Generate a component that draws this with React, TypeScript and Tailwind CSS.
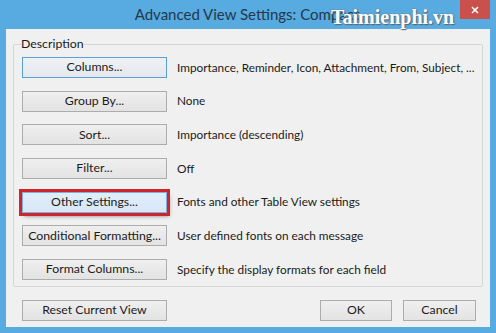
import React from "react";

const rows: { label: string; desc: string; kind?: "default" | "hot" }[] = [
  { label: "Columns...", desc: "Importance, Reminder, Icon, Attachment, From, Subject, ...", kind: "default" },
  { label: "Group By...", desc: "None" },
  { label: "Sort...", desc: "Importance (descending)" },
  { label: "Filter...", desc: "Off" },
  { label: "Other Settings...", desc: "Fonts and other Table View settings", kind: "hot" },
  { label: "Conditional Formatting...", desc: "User defined fonts on each message" },
  { label: "Format Columns...", desc: "Specify the display formats for each field" },
];

function Btn({ label, kind, className = "" }: { label: string; kind?: "default" | "hot"; className?: string }) {
  const base =
    kind === "default"
      ? "border-[#5b9fdc] bg-[linear-gradient(#eff2f5,#e4e8ec)]"
      : kind === "hot"
      ? "border-[#7ab0e4] bg-[linear-gradient(#e2eefa,#d6e7f7)] outline-[3px] outline-solid outline-[#d0242c] shadow-[2px_3px_4px_rgba(0,0,0,0.45)]"
      : "border-[#acacac] bg-[linear-gradient(#efefef,#e3e3e3)]";
  return (
    <div
      className={`h-[21px] flex items-center justify-center border text-[12.3px] text-[#1b1b1b] leading-none ${base} ${className}`}
    >
      {label}
    </div>
  );
}

export default function App() {
  return (
    <div
      className="w-[496px] h-[333px] bg-[#58abe0] flex flex-col overflow-hidden"
      style={{ fontFamily: 'Lato, "Noto Sans", sans-serif' }}
    >
      <div className="relative h-[29px] shrink-0 flex items-center justify-center">
        <span className="text-[15px] text-[#23384c] -translate-x-[1px]">
          Advanced View Settings: Compact
        </span>
        <div className="absolute right-[6px] top-0 w-[30px] h-[19px] bg-[#c9504b] flex items-center justify-center">
          <svg width="8" height="8" viewBox="0 0 8 8">
            <path d="M1 1L7 7M7 1L1 7" stroke="#fff" strokeWidth="1.6" />
          </svg>
        </div>
        <span
          className="absolute left-[331px] top-[7px] text-[20px] font-bold text-white leading-none"
          style={{
            fontFamily: '"Liberation Serif", serif',
            textShadow: "0 0 2px #6a7f90, 1px 1px 1px #4c6275",
          }}
        >
          Taimienphi.vn
        </span>
      </div>
      <div className="flex-1 mx-[6px] mb-[6px] bg-[#f0f0f0] flex flex-col px-[7px] pt-[8px]">
        <fieldset className="border border-[#d5d5d5] rounded-[2px] px-[8px] pb-[6px] pt-[6px] w-[470px]">
          <legend className="text-[12.3px] text-[#1b1b1b] px-0 -ml-[1px] leading-[14px]">Description</legend>
          <div className="flex flex-col gap-[12.7px]">
            {rows.map((r) => (
              <div key={r.label} className="flex items-center gap-[10px]">
                <Btn label={r.label} kind={r.kind} className="w-[145px] shrink-0" />
                <span className="text-[11.8px] text-[#1b1b1b] whitespace-nowrap">{r.desc}</span>
              </div>
            ))}
          </div>
        </fieldset>
        <div className="flex items-center mt-[13px] pl-[9px] pr-[7px]">
          <Btn label="Reset Current View" className="w-[145px]" />
          <div className="flex-1" />
          <Btn label="OK" className="w-[72px]" />
          <Btn label="Cancel" className="w-[73px] ml-[11px]" />
        </div>
      </div>
    </div>
  );
}
